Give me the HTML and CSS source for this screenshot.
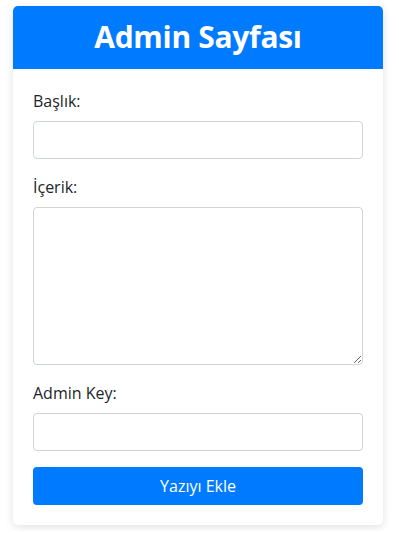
FILE: index.html
```html
<!DOCTYPE html>
<html lang="tr">
<head>
  <meta charset="UTF-8">
  <title>Admin Sayfası</title>
  <meta name="viewport" content="width=device-width, initial-scale=1.0">
  <link rel="stylesheet" href="styles.css">
</head>
<body>

  <div class="card">
    <div class="card-header">
      <h1>Admin Sayfası</h1>
    </div>
    <form class="card-body">
      <div class="form-group">
        <label for="title">Başlık:</label>
        <input type="text" id="title" class="form-control">
      </div>
      <div class="form-group">
        <label for="content">İçerik:</label>
        <textarea id="content" class="form-control content"></textarea>
      </div>
      <div class="form-group">
        <label for="key">Admin Key:</label>
        <input type="password" id="key" class="form-control">
      </div>
      <button type="submit" class="btn-primary">Yazıyı Ekle</button>
    </form>
  </div>

</body>
</html>
```

FILE: styles.css
```css
:root {
  --primary: #007bff;
  --text-color: #212529;
  --border: #ced4da;
}

* {
  box-sizing: border-box;
}

body {
  margin: 0;
  padding: 6px 0;
  font-family: 'Open Sans', 'Noto Sans', sans-serif;
  font-size: 16px;
  line-height: 1.5;
  color: var(--text-color);
  background-color: #fff;
}

.card {
  width: 370px;
  margin: 0 auto 0 13px;
  background: #fff;
  border-radius: 5px;
  box-shadow: 0 2px 8px rgba(0, 0, 0, 0.12);
  overflow: hidden;
}

.card-header {
  background-color: var(--primary);
  color: #fff;
  padding: 12px 12px 13px;
  text-align: center;
}

.card-header h1 {
  margin: 0;
  font-size: 30px;
  font-weight: 700;
  line-height: 38px;
  letter-spacing: -0.3px;
}

.card-body {
  padding: 20px;
}

.form-group {
  margin-bottom: 16px;
}

label {
  display: block;
  margin-bottom: 8px;
}

.form-control {
  display: block;
  width: 100%;
  height: 38px;
  padding: 6px 12px;
  font: inherit;
  color: #495057;
  border: 1px solid var(--border);
  border-radius: 4px;
  background: #fff;
}

.content {
  height: 158px;
  resize: vertical;
}

.btn-primary {
  display: block;
  width: 100%;
  height: 38px;
  font: inherit;
  color: #fff;
  background-color: var(--primary);
  border: none;
  border-radius: 4px;
  cursor: pointer;
}
```
